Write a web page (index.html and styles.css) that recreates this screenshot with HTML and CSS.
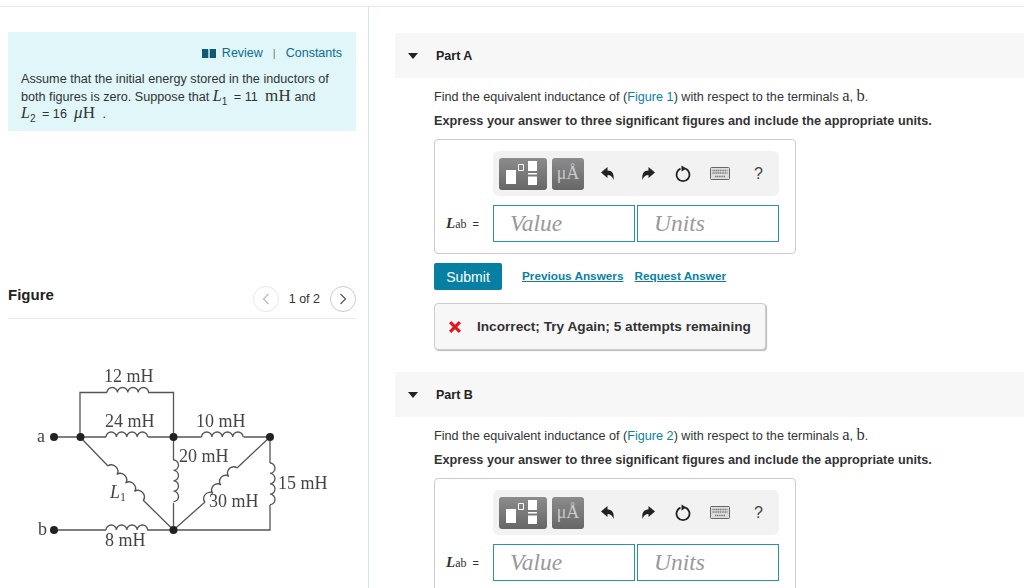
FILE: index.html
```html
<!DOCTYPE html>
<html lang="en">

<head>
    <meta charset="UTF-8" />
    <meta name="viewport" content="width=device-width, initial-scale=1.0" />
    <title>Equivalent Inductance</title>
    <link rel="stylesheet" href="styles.css">
</head>

<body>
    <div class="layout">
        <aside class="side">
            <div class="intro">
                <div class="intro__links">
                    <svg class="intro__book" width="14" height="9" viewBox="0 0 14 9">
                        <path d="M0 0h6.300v9H0zM7.700 0H14v9H7.700z" />
                    </svg>
                    <a class="intro__link">Review</a>
                    <span class="intro__sep">|</span>
                    <a class="intro__link">Constants</a>
                </div>
                <p class="intro__text">Assume that the initial energy stored in the inductors of both figures is zero. Suppose that <i class="math">L<sub>1</sub></i> = 11 &nbsp;<span class="math math--unit">mH</span> and<br><i class="math">L<sub>2</sub></i> = 16 &nbsp;<span class="math math--unit"><i>μ</i>H</span> &nbsp;.</p>
            </div>

            <div class="figure__head">
                <h2 class="figure__title">Figure</h2>
                <div class="pager">
                    <span class="pager__btn pager__btn--off">
                        <svg width="8" height="12" viewBox="0 0 8 12"><path d="M6.500 1L1.500 6l5 5" /></svg>
                    </span>
                    <span class="pager__count">1 of 2</span>
                    <span class="pager__btn">
                        <svg width="8" height="12" viewBox="0 0 8 12"><path d="M1.500 1l5 5-5 5" /></svg>
                    </span>
                </div>
            </div>

            <!-- viewBox uses page coordinates so the parts are easy to place -->
            <svg class="circuit" width="348" height="190" viewBox="8 360 348 190">
                <defs>
                    <path id="coil" d="M0 0a5.200 5 0 0 1 10.400 0a5.200 5 0 0 1 10.400 0a5.200 5 0 0 1 10.400 0a5.200 5 0 0 1 10.400 0" />
                </defs>
                <g class="circuit__wires">
                    <path d="M80 437V392.500H107M148 392.500H173.500V437" />
                    <path d="M54 437H106M148 437H201.500M243.500 437H270" />
                    <path d="M173.500 437V460M173.500 503V530" />
                    <path d="M270 437V463M270 505V530H173.500" />
                    <path d="M54 530H106M147 530H173.500" />
                    <path d="M80 437L108 466M143 500L173.500 530" />
                    <path d="M173.500 530L205 502M237 468L270 437" />
                    <use href="#coil" transform="translate(107 392.500)" />
                    <use href="#coil" transform="translate(106 437)" />
                    <use href="#coil" transform="translate(201.500 437)" />
                    <use href="#coil" transform="translate(106 530)" />
                    <use href="#coil" transform="translate(173.500 460) rotate(90)" />
                    <use href="#coil" transform="translate(270 463) rotate(90)" />
                    <use href="#coil" transform="translate(108 466) rotate(44) scale(1.180 1)" />
                    <use href="#coil" transform="translate(205 502) rotate(-47) scale(1.120 1)" />
                </g>
                <g class="circuit__nodes">
                    <circle cx="54" cy="437" r="4" />
                    <circle cx="80.500" cy="437" r="4" />
                    <circle cx="173.500" cy="437" r="4" />
                    <circle cx="270" cy="437" r="4" />
                    <circle cx="54" cy="530" r="4" />
                    <circle cx="173.500" cy="530" r="4" />
                </g>
                <g class="circuit__labels">
                    <text x="104" y="382">12 mH</text>
                    <text x="105" y="427">24 mH</text>
                    <text x="196" y="427">10 mH</text>
                    <text x="179" y="462">20 mH</text>
                    <text x="278" y="489">15 mH</text>
                    <text x="209" y="507">30 mH</text>
                    <text x="105" y="546">8 mH</text>
                    <text x="37" y="442">a</text>
                    <text x="38" y="535">b</text>
                    <text x="110" y="498" font-style="italic">L<tspan class="circuit__sub" dy="3">1</tspan></text>
                </g>
            </svg>
        </aside>

        <main class="parts">
            <section class="part">
                <div class="part__bar">
                    <span class="part__caret"></span>
                    <h3 class="part__name">Part A</h3>
                </div>
                <div class="part__body">
                    <p class="part__question">Find the equivalent inductance of (<a class="part__link">Figure 1</a>) with respect to the terminals <span class="math">a</span>, <span class="math">b</span>.</p>
                    <p class="part__hint">Express your answer to three significant figures and include the appropriate units.</p>

                    <div class="answer">
                        <div class="tools">
                            <span class="tools__btn tools__btn--wide">
                                <svg width="48" height="32" viewBox="0 0 48 32">
                                    <path class="tools__fill" d="M7 12h10v14H7zM29 3h9v10h-9zM29 15h9v1.500h-9zM29 18.500h9V27h-9z" />
                                    <path class="tools__line" d="M19.500 6.500h5v6h-5z" />
                                </svg>
                            </span>
                            <span class="tools__btn tools__btn--sym">μÅ</span>
                            <svg class="tools__icon tools__icon--undo" width="16" height="16" viewBox="0 0 16 16"><path d="M1 6.500L7.500 1v3.500c4.500 0 7 3 6 9.500-1-3.500-3-5-6-5V12z" /></svg>
                            <svg class="tools__icon tools__icon--redo" width="16" height="16" viewBox="0 0 16 16"><path d="M15 6.500L8.500 1v3.500C4 4.500 1.500 7.500 2.500 14c1-3.500 3-5 6-5V12z" /></svg>
                            <svg class="tools__icon tools__icon--reset" width="18" height="18" viewBox="0 0 18 18"><path class="tools__ring" d="M11.500 3.700a6.500 6.500 0 1 1-5 0" /><path d="M7.500 0.500l5 3-5 3z" /></svg>
                            <svg class="tools__icon tools__icon--keys" width="20" height="13" viewBox="0 0 20 13">
                                <rect x="0.500" y="0.500" width="19" height="12" rx="1" fill="#ddd" stroke="#666" />
                                <path d="M2.500 3.500h15M2.500 6h15M5 9.500h10" stroke="#777" stroke-width="1.400" stroke-dasharray="1.200 .6" fill="none" />
                            </svg>
                            <span class="tools__help">?</span>
                        </div>
                        <div class="answer__row">
                            <span class="answer__label"><i class="math math--big">L</i><span class="math math--small">ab</span><span class="answer__eq">=</span></span>
                            <div class="answer__field">Value</div>
                            <div class="answer__field">Units</div>
                        </div>
                    </div>

                    <div class="actions">
                        <button class="actions__submit">Submit</button>
                        <a class="actions__link">Previous Answers</a>
                        <a class="actions__link">Request Answer</a>
                    </div>

                    <div class="feedback">
                        <svg width="14" height="14" viewBox="0 0 14 14"><path d="M1 3.200L3.200 1 7 4.800 10.800 1 13 3.200 9.200 7 13 10.800 10.800 13 7 9.200 3.200 13 1 10.800 4.800 7z" fill="#e8141c" /></svg>
                        <span>Incorrect; Try Again; 5 attempts remaining</span>
                    </div>
                </div>
            </section>

            <section class="part">
                <div class="part__bar">
                    <span class="part__caret"></span>
                    <h3 class="part__name">Part B</h3>
                </div>
                <div class="part__body">
                    <p class="part__question">Find the equivalent inductance of (<a class="part__link">Figure 2</a>) with respect to the terminals <span class="math">a</span>, <span class="math">b</span>.</p>
                    <p class="part__hint">Express your answer to three significant figures and include the appropriate units.</p>

                    <div class="answer">
                        <div class="tools">
                            <span class="tools__btn tools__btn--wide">
                                <svg width="48" height="32" viewBox="0 0 48 32">
                                    <path class="tools__fill" d="M7 12h10v14H7zM29 3h9v10h-9zM29 15h9v1.500h-9zM29 18.500h9V27h-9z" />
                                    <path class="tools__line" d="M19.500 6.500h5v6h-5z" />
                                </svg>
                            </span>
                            <span class="tools__btn tools__btn--sym">μÅ</span>
                            <svg class="tools__icon tools__icon--undo" width="16" height="16" viewBox="0 0 16 16"><path d="M1 6.500L7.500 1v3.500c4.500 0 7 3 6 9.500-1-3.500-3-5-6-5V12z" /></svg>
                            <svg class="tools__icon tools__icon--redo" width="16" height="16" viewBox="0 0 16 16"><path d="M15 6.500L8.500 1v3.500C4 4.500 1.500 7.500 2.500 14c1-3.500 3-5 6-5V12z" /></svg>
                            <svg class="tools__icon tools__icon--reset" width="18" height="18" viewBox="0 0 18 18"><path class="tools__ring" d="M11.500 3.700a6.500 6.500 0 1 1-5 0" /><path d="M7.500 0.500l5 3-5 3z" /></svg>
                            <svg class="tools__icon tools__icon--keys" width="20" height="13" viewBox="0 0 20 13">
                                <rect x="0.500" y="0.500" width="19" height="12" rx="1" fill="#ddd" stroke="#666" />
                                <path d="M2.500 3.500h15M2.500 6h15M5 9.500h10" stroke="#777" stroke-width="1.400" stroke-dasharray="1.200 .6" fill="none" />
                            </svg>
                            <span class="tools__help">?</span>
                        </div>
                        <div class="answer__row">
                            <span class="answer__label"><i class="math math--big">L</i><span class="math math--small">ab</span><span class="answer__eq">=</span></span>
                            <div class="answer__field">Value</div>
                            <div class="answer__field">Units</div>
                        </div>
                    </div>
                </div>
            </section>
        </main>
    </div>
</body>

</html>
```

FILE: styles.css
```css
html,
body {
    height: 100%;
    overflow: hidden;
}

body {
    margin: 0;
    padding-top: 6px;
    box-sizing: border-box;
    font-family: "Liberation Sans", Arial, sans-serif;
    color: #333;
    background: #fff;
}

p,
h2,
h3 {
    margin: 0;
}

.math {
    font-family: "Liberation Serif", "Times New Roman", serif;
    font-size: 16px;
}

.math sub {
    margin-right: 3px;
    font-family: "Liberation Sans", Arial, sans-serif;
    font-style: normal;
    font-size: 10px;
    line-height: 0;
}

.math--unit {
    font-size: 17px;
    letter-spacing: 0.300px;
}

.layout {
    display: grid;
    grid-template-columns: 369px 1fr;
    height: 582px;
    border-top: 1px solid #e4e7ec;
}

/* left column */
.side {
    padding: 25px 12px 0 8px;
    border-right: 1px solid #d9e3ef;
}

.intro {
    height: 99px;
    box-sizing: border-box;
    padding: 13px 14px 0 13px;
    background: #e0f6f8;
}

.intro__links {
    display: flex;
    justify-content: flex-end;
    align-items: center;
    height: 16px;
    font-size: 12.500px;
    color: #0b6f8b;
}

.intro__book {
    fill: #0f5a72;
    margin-right: 6px;
}

.intro__sep {
    margin: 0 10px 0 10px;
    color: #777;
    font-size: 11px;
}

.intro__text {
    margin-top: 11px;
    font-size: 12.650px;
    line-height: 15.500px;
}

.figure__head {
    display: flex;
    justify-content: space-between;
    height: 36px;
    margin-top: 151px;
    border-bottom: 1px solid #e8e8e8;
}

.figure__title {
    font-size: 15px;
    line-height: 18px;
    margin-top: 4px;
    color: #222;
}

.pager {
    display: flex;
    align-items: center;
    height: 26px;
    margin-top: 4px;
    font-size: 12.500px;
}

.pager__btn {
    display: flex;
    align-items: center;
    justify-content: center;
    width: 24px;
    height: 24px;
    border: 1px solid #ccc;
    border-radius: 50%;
}

.pager__btn svg {
    fill: none;
    stroke: #555;
    stroke-width: 1.200;
}

.pager__btn--off {
    border-color: #e8e8e8;
}

.pager__btn--off svg {
    stroke: #bbb;
}

.pager__count {
    margin: 0 10px 0 10px;
}

.circuit {
    display: block;
    margin-top: 41px;
    filter: blur(0.3px);
}

.circuit__wires {
    fill: none;
    stroke: #555;
    stroke-width: 1.300;
}

.circuit__nodes {
    fill: #222;
}

.circuit__labels {
    font-family: "Liberation Serif", "Times New Roman", serif;
    font-size: 18px;
    fill: #444;
}

.circuit__sub {
    font-size: 12px;
    font-style: normal;
}

/* right column */
.parts {
    padding: 26px 0 0 26px;
    overflow: hidden;
}

.part {
    margin-bottom: 22px;
}

.part__bar {
    display: flex;
    align-items: center;
    height: 45px;
    background: #f7f7f7;
}

.part__caret {
    width: 0;
    height: 0;
    margin-left: 13px;
    border-style: solid;
    border-width: 6px 5px 0 5px;
    border-color: #222 transparent transparent transparent;
}

.part__name {
    margin-left: 18px;
    font-size: 12.500px;
    color: #222;
}

.part__body {
    padding: 10px 0 0 39px;
}

.part__question {
    font-size: 12.650px;
    line-height: 16px;
}

.part__question .math {
    font-size: 16.500px;
}

.part__link {
    color: #0b7f9f;
}

.part__hint {
    margin-top: 8px;
    font-size: 12.700px;
    line-height: 16px;
    font-weight: bold;
}

.answer {
    width: 362px;
    height: 115px;
    box-sizing: border-box;
    margin-top: 10px;
    padding: 11px 0 0 11px;
    border: 1px solid #ccc;
    border-radius: 4px;
}

.tools {
    display: flex;
    align-items: center;
    height: 45px;
    width: 286px;
    box-sizing: border-box;
    margin-left: 47px;
    padding-left: 6px;
    background: #f2f2f2;
    border-radius: 6px;
}

.tools__btn {
    display: flex;
    align-items: center;
    justify-content: center;
    height: 32px;
    border-radius: 3px;
    background: linear-gradient(#8c8c8c, #666);
}

.tools__btn--wide {
    width: 48px;
}

.tools__btn--sym {
    width: 32px;
    margin-left: 5px;
    font-family: "Liberation Serif", "Times New Roman", serif;
    font-size: 18px;
    color: #c9c9c9;
}

.tools__fill {
    fill: #fff;
}

.tools__line {
    fill: none;
    stroke: #fff;
}

.tools__icon {
    fill: #222;
    flex: none;
}

.tools__icon--undo {
    margin-left: 16px;
}

.tools__icon--redo {
    margin-left: 24px;
}

.tools__icon--reset {
    margin-left: 18px;
}

.tools__icon--keys {
    margin-left: 18px;
}

.tools__ring {
    fill: none;
    stroke: #222;
    stroke-width: 1.800;
}

.tools__help {
    margin-left: 24px;
    font-size: 16px;
    color: #444;
}

.answer__row {
    display: flex;
    align-items: center;
    margin-top: 9px;
}

.answer__label {
    flex: none;
    width: 47px;
    font-size: 11px;
    white-space: nowrap;
}

.answer__eq {
    margin-left: 6px;
}

.math--big {
    font-size: 15px;
    font-weight: bold;
}

.math--small {
    font-size: 12px;
}

.answer__field {
    flex: none;
    width: 142px;
    height: 37px;
    box-sizing: border-box;
    margin-right: 2px;
    padding-left: 16px;
    border: 1px solid #2a90b0;
    font-family: "Liberation Serif", "Times New Roman", serif;
    font-style: italic;
    font-size: 23.500px;
    line-height: 35px;
    color: #999;
}

.actions {
    display: flex;
    align-items: center;
    margin-top: 9px;
}

.actions__submit {
    width: 68px;
    height: 27px;
    border: 0;
    border-radius: 2px;
    background: #077fa2;
    color: #fff;
    font-family: inherit;
    font-size: 14px;
}

.actions__link {
    margin-left: 11px;
    margin-bottom: 3px;
    font-size: 11.750px;
    font-weight: bold;
    color: #0b7f9f;
    text-decoration: underline;
}

.actions__submit + .actions__link {
    margin-left: 20px;
}

.feedback {
    display: flex;
    align-items: center;
    gap: 15px;
    width: 332px;
    height: 47px;
    box-sizing: border-box;
    margin-top: 13px;
    padding-left: 13px;
    background: #f7f7f7;
    border: 1px solid #ccc;
    border-radius: 4px;
    box-shadow: 1px 1px 1px #bbb;
    font-size: 13.650px;
    font-weight: bold;
}
```
